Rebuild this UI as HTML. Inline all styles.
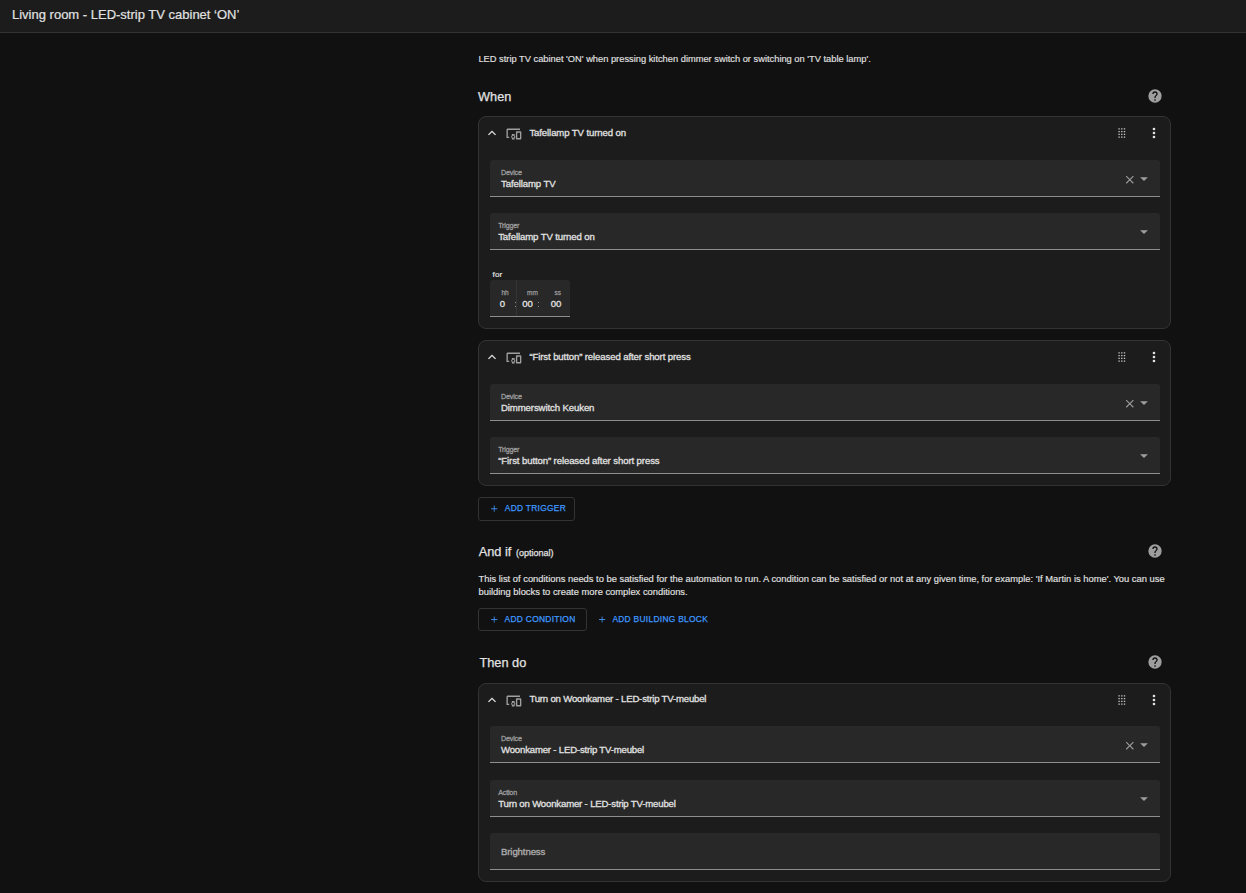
<!DOCTYPE html>
<html><head><meta charset="utf-8"><title>Automation</title>
<style>
html,body{margin:0;padding:0;width:1246px;height:893px;overflow:hidden;background:#111111;font-family:"Liberation Sans",sans-serif;}
#hdr{position:absolute;left:0;top:0;width:1246px;height:32px;background:#1c1c1c;border-bottom:1px solid #343434;}
.t{position:absolute;white-space:nowrap;line-height:1;}
.i{position:absolute;overflow:visible;}
.card{position:absolute;left:478px;box-sizing:border-box;width:693px;background:#1c1c1c;border:1px solid #333333;border-radius:8px;}
.fld{position:absolute;left:490px;width:670px;height:37px;box-sizing:border-box;background:#282828;border-bottom:1px solid #8e8e8e;border-radius:3px 3px 0 0;}
.btn{position:absolute;box-sizing:border-box;border:1px solid #333333;border-radius:3px;}
</style></head>
<body>
<div id="hdr"></div>
<div class="t" style="left:12.00px;top:8.20px;font-size:13px;color:#e1e1e1;font-weight:400;-webkit-text-stroke:0.2px currentColor;">Living room - LED-strip TV cabinet ‘ON’</div>
<div class="t" style="left:478.40px;top:54.63px;font-size:9.3px;color:#e1e1e1;font-weight:400;-webkit-text-stroke:0.15px currentColor;">LED strip TV cabinet 'ON' when pressing kitchen dimmer switch or switching on 'TV table lamp'.</div>
<div class="t" style="left:478.10px;top:90.85px;font-size:12.7px;color:#e1e1e1;font-weight:400;-webkit-text-stroke:0.25px currentColor;">When</div>
<svg class="i" style="left:1147px;top:88px;width:18px;height:18px" viewBox="0 0 27.0000 27.0000"><path transform="translate(0.0000 0.0000)" fill="#9e9e9e" d="M15.07,11.25L14.17,12.17C13.45,12.89 13,13.5 13,15H11V14.5C11,13.39 11.45,12.39 12.17,11.67L13.41,10.41C13.78,10.05 14,9.55 14,9C14,7.89 13.1,7 12,7A2,2 0 0,0 10,9H8A4,4 0 0,1 12,5A4,4 0 0,1 16,9C16,9.88 15.64,10.67 15.07,11.25M13,19H11V17H13M12,2A10,10 0 0,0 2,12A10,10 0 0,0 12,22A10,10 0 0,0 22,12C22,6.47 17.5,2 12,2Z"/></svg>
<div class="card" style="top:116px;height:213px"></div>
<svg class="i" style="left:484px;top:125px;width:18px;height:18px" viewBox="0 0 27.0000 27.0000"><path transform="translate(0.0000 0.1500)" fill="#e1e1e1" d="M7.41,15.41L12,10.83L16.59,15.41L18,14L12,8L6,14L7.41,15.41Z"/></svg>
<svg class="i" style="left:505px;top:125px;width:19px;height:19px" viewBox="0 0 28.1481 28.1481"><path transform="translate(1.1852 1.3333)" fill="#a0a0a0" d="M3 6H21V4H3C1.9 4 1 4.9 1 6V18H5V16H3V6M13 12H9V13.78C8.39 14.33 8 15.11 8 16C8 16.89 8.39 17.67 9 18.22V20H13V18.22C13.61 17.67 14 16.88 14 16S13.61 14.33 13 13.78V12M11 17.5C10.17 17.5 9.5 16.830 9.5 16S10.17 14.5 11 14.5 12.5 15.17 12.5 16 11.83 17.5 11 17.5M22 8H16C15.5 8 15 8.5 15 9V19C15 19.5 15.5 20 16 20H22C22.5 20 23 19.5 23 19V9C23 8.5 22.5 8 22 8M21 18H17V10H21V18Z"/></svg>
<div class="t" style="left:529.40px;top:127.87px;font-size:9.6px;color:#e1e1e1;font-weight:400;-webkit-text-stroke:0.3px currentColor;letter-spacing:-0.11px;">Tafellamp TV turned on</div>
<svg class="i" style="left:1113px;top:124px;width:19px;height:19px" viewBox="0 0 27.9755 27.9755"><path transform="translate(0.9571 1.2515)" fill="#c8c8c8" d="M7,19V17H9V19H7M11,19V17H13V19H11M15,19V17H17V19H15M7,15V13H9V15H7M11,15V13H13V15H11M15,15V13H17V15H15M7,11V9H9V11H7M11,11V9H13V11H11M15,11V9H17V11H15M7,7V5H9V7H7M11,7V5H13V7H11M15,7V5H17V7H15Z"/></svg>
<svg class="i" style="left:1146px;top:125px;width:18px;height:18px" viewBox="0 0 27.0000 27.0000"><path transform="translate(0.0000 0.0000)" fill="#e1e1e1" d="M12,16A2,2 0 0,1 14,18A2,2 0 0,1 12,20A2,2 0 0,1 10,18A2,2 0 0,1 12,16M12,10A2,2 0 0,1 14,12A2,2 0 0,1 12,14A2,2 0 0,1 10,12A2,2 0 0,1 12,10M12,4A2,2 0 0,1 14,6A2,2 0 0,1 12,8A2,2 0 0,1 10,6A2,2 0 0,1 12,4Z"/></svg>
<div class="fld" style="top:160px"></div>
<div class="t" style="left:501.00px;top:168.91px;font-size:7.2px;color:#9b9b9b;font-weight:400;-webkit-text-stroke:0.3px currentColor;letter-spacing:-0.2px;">Device</div>
<div class="t" style="left:501.00px;top:178.72px;font-size:9.6px;color:#e1e1e1;font-weight:400;-webkit-text-stroke:0.3px currentColor;letter-spacing:-0.11px;">Tafellamp TV</div>
<svg class="i" style="left:1123px;top:172px;width:16px;height:16px" viewBox="0 0 28.2353 28.2353"><path transform="translate(0.0000 1.5882)" fill="#9e9e9e" d="M19,6.41L17.59,5L12,10.59L6.41,5L5,6.41L10.59,12L5,17.59L6.41,19L12,13.41L17.59,19L19,17.59L13.41,12L19,6.41Z"/></svg>
<svg class="i" style="left:1134px;top:169px;width:21px;height:21px" viewBox="0 0 26.9519 26.9519"><path transform="translate(0.8342 0.4492)" fill="#9e9e9e" d="M7,10L12,15L17,10H7Z"/></svg>
<div class="fld" style="top:213px"></div>
<div class="t" style="left:498.20px;top:221.91px;font-size:7.2px;color:#9b9b9b;font-weight:400;-webkit-text-stroke:0.3px currentColor;letter-spacing:-0.2px;">Trigger</div>
<div class="t" style="left:498.20px;top:231.72px;font-size:9.6px;color:#e1e1e1;font-weight:400;-webkit-text-stroke:0.3px currentColor;letter-spacing:-0.11px;">Tafellamp TV turned on</div>
<svg class="i" style="left:1134px;top:222px;width:21px;height:21px" viewBox="0 0 26.9519 26.9519"><path transform="translate(0.8342 0.4492)" fill="#9e9e9e" d="M7,10L12,15L17,10H7Z"/></svg>
<div class="t" style="left:492.50px;top:270.53px;font-size:8.0px;color:#e1e1e1;font-weight:400;-webkit-text-stroke:0.2px currentColor;letter-spacing:0.2px;">for</div>
<div class="fld" style="top:280px;left:490px;width:80px"></div>
<div style="position:absolute;left:516px;top:280px;width:1px;height:36px;background:#343434"></div>
<div class="t" style="left:501.50px;top:289.70px;font-size:6.5px;color:#9b9b9b;font-weight:400;-webkit-text-stroke:0.25px currentColor;">hh</div>
<div class="t" style="left:499.80px;top:299.17px;font-size:9.6px;color:#e1e1e1;font-weight:400;-webkit-text-stroke:0.3px currentColor;letter-spacing:-0.11px;">0</div>
<div style="position:absolute;left:515px;top:302px;width:1px;height:1px;background:#8c8c8c"></div>
<div style="position:absolute;left:515px;top:306px;width:1px;height:1px;background:#8c8c8c"></div>
<div style="position:absolute;left:538px;top:302px;width:1px;height:1px;background:#8c8c8c"></div>
<div style="position:absolute;left:538px;top:306px;width:1px;height:1px;background:#8c8c8c"></div>
<div class="t" style="left:527.00px;top:289.70px;font-size:6.5px;color:#9b9b9b;font-weight:400;-webkit-text-stroke:0.25px currentColor;letter-spacing:0.2px;">mm</div>
<div class="t" style="left:522.20px;top:299.17px;font-size:9.6px;color:#e1e1e1;font-weight:400;-webkit-text-stroke:0.3px currentColor;letter-spacing:-0.11px;">00</div>
<div class="t" style="left:554.50px;top:289.70px;font-size:6.5px;color:#9b9b9b;font-weight:400;-webkit-text-stroke:0.25px currentColor;">ss</div>
<div class="t" style="left:550.80px;top:299.17px;font-size:9.6px;color:#e1e1e1;font-weight:400;-webkit-text-stroke:0.3px currentColor;letter-spacing:-0.11px;">00</div>
<div class="card" style="top:340px;height:146px"></div>
<svg class="i" style="left:484px;top:349px;width:18px;height:18px" viewBox="0 0 27.0000 27.0000"><path transform="translate(0.0000 0.1500)" fill="#e1e1e1" d="M7.41,15.41L12,10.83L16.59,15.41L18,14L12,8L6,14L7.41,15.41Z"/></svg>
<svg class="i" style="left:505px;top:349px;width:19px;height:19px" viewBox="0 0 28.1481 28.1481"><path transform="translate(1.1852 1.3333)" fill="#a0a0a0" d="M3 6H21V4H3C1.9 4 1 4.9 1 6V18H5V16H3V6M13 12H9V13.78C8.39 14.33 8 15.11 8 16C8 16.89 8.39 17.67 9 18.22V20H13V18.22C13.61 17.67 14 16.88 14 16S13.61 14.33 13 13.78V12M11 17.5C10.17 17.5 9.5 16.830 9.5 16S10.17 14.5 11 14.5 12.5 15.17 12.5 16 11.83 17.5 11 17.5M22 8H16C15.5 8 15 8.5 15 9V19C15 19.5 15.5 20 16 20H22C22.5 20 23 19.5 23 19V9C23 8.5 22.5 8 22 8M21 18H17V10H21V18Z"/></svg>
<div class="t" style="left:529.40px;top:351.87px;font-size:9.6px;color:#e1e1e1;font-weight:400;-webkit-text-stroke:0.3px currentColor;letter-spacing:-0.11px;">“First button” released after short press</div>
<svg class="i" style="left:1113px;top:348px;width:19px;height:19px" viewBox="0 0 27.9755 27.9755"><path transform="translate(0.9571 1.2515)" fill="#c8c8c8" d="M7,19V17H9V19H7M11,19V17H13V19H11M15,19V17H17V19H15M7,15V13H9V15H7M11,15V13H13V15H11M15,15V13H17V15H15M7,11V9H9V11H7M11,11V9H13V11H11M15,11V9H17V11H15M7,7V5H9V7H7M11,7V5H13V7H11M15,7V5H17V7H15Z"/></svg>
<svg class="i" style="left:1146px;top:349px;width:18px;height:18px" viewBox="0 0 27.0000 27.0000"><path transform="translate(0.0000 0.0000)" fill="#e1e1e1" d="M12,16A2,2 0 0,1 14,18A2,2 0 0,1 12,20A2,2 0 0,1 10,18A2,2 0 0,1 12,16M12,10A2,2 0 0,1 14,12A2,2 0 0,1 12,14A2,2 0 0,1 10,12A2,2 0 0,1 12,10M12,4A2,2 0 0,1 14,6A2,2 0 0,1 12,8A2,2 0 0,1 10,6A2,2 0 0,1 12,4Z"/></svg>
<div class="fld" style="top:384px"></div>
<div class="t" style="left:501.00px;top:392.91px;font-size:7.2px;color:#9b9b9b;font-weight:400;-webkit-text-stroke:0.3px currentColor;letter-spacing:-0.2px;">Device</div>
<div class="t" style="left:501.00px;top:402.72px;font-size:9.6px;color:#e1e1e1;font-weight:400;-webkit-text-stroke:0.3px currentColor;letter-spacing:-0.11px;">Dimmerswitch Keuken</div>
<svg class="i" style="left:1123px;top:396px;width:16px;height:16px" viewBox="0 0 28.2353 28.2353"><path transform="translate(0.0000 1.5882)" fill="#9e9e9e" d="M19,6.41L17.59,5L12,10.59L6.41,5L5,6.41L10.59,12L5,17.59L6.41,19L12,13.41L17.59,19L19,17.59L13.41,12L19,6.41Z"/></svg>
<svg class="i" style="left:1134px;top:393px;width:21px;height:21px" viewBox="0 0 26.9519 26.9519"><path transform="translate(0.8342 0.4492)" fill="#9e9e9e" d="M7,10L12,15L17,10H7Z"/></svg>
<div class="fld" style="top:437px"></div>
<div class="t" style="left:498.20px;top:445.91px;font-size:7.2px;color:#9b9b9b;font-weight:400;-webkit-text-stroke:0.3px currentColor;letter-spacing:-0.2px;">Trigger</div>
<div class="t" style="left:498.20px;top:455.72px;font-size:9.6px;color:#e1e1e1;font-weight:400;-webkit-text-stroke:0.3px currentColor;letter-spacing:-0.11px;">“First button” released after short press</div>
<svg class="i" style="left:1134px;top:446px;width:21px;height:21px" viewBox="0 0 26.9519 26.9519"><path transform="translate(0.8342 0.4492)" fill="#9e9e9e" d="M7,10L12,15L17,10H7Z"/></svg>
<div class="btn" style="left:478px;top:497px;width:97px;height:24px"></div>
<svg class="i" style="left:488px;top:503px;width:13px;height:13px" viewBox="0 0 29.4340 29.4340"><path transform="translate(2.0377 0.9057)" fill="#3a8ae6" d="M19,13H13V19H11V13H5V11H11V5H13V11H19V13Z"/></svg>
<div class="t" style="left:504.80px;top:504.49px;font-size:8.4px;color:#3e98ff;font-weight:400;letter-spacing:0.3px;-webkit-text-stroke:0.25px currentColor;">ADD TRIGGER</div>
<div class="t" style="left:478.70px;top:545.96px;font-size:12.8px;color:#e1e1e1;font-weight:400;-webkit-text-stroke:0.25px currentColor;">And if <span style="font-size:9px;margin-left:1px">(optional)</span></div>
<svg class="i" style="left:1147px;top:543px;width:18px;height:18px" viewBox="0 0 27.0000 27.0000"><path transform="translate(0.0000 0.0000)" fill="#9e9e9e" d="M15.07,11.25L14.17,12.17C13.45,12.89 13,13.5 13,15H11V14.5C11,13.39 11.45,12.39 12.17,11.67L13.41,10.41C13.78,10.05 14,9.55 14,9C14,7.89 13.1,7 12,7A2,2 0 0,0 10,9H8A4,4 0 0,1 12,5A4,4 0 0,1 16,9C16,9.88 15.64,10.67 15.07,11.25M13,19H11V17H13M12,2A10,10 0 0,0 2,12A10,10 0 0,0 12,22A10,10 0 0,0 22,12C22,6.47 17.5,2 12,2Z"/></svg>
<div class="t" style="left:478.5px;top:573px;font-size:9.37px;line-height:12.6px;width:720px;white-space:normal;color:#e1e1e1;-webkit-text-stroke:0.15px currentColor">This list of conditions needs to be satisfied for the automation to run. A condition can be satisfied or not at any given time, for example: 'If Martin is home'. You can use<br>building blocks to create more complex conditions.</div>
<div class="btn" style="left:478px;top:608px;width:109px;height:23px"></div>
<svg class="i" style="left:488px;top:614px;width:13px;height:13px" viewBox="0 0 29.4340 29.4340"><path transform="translate(2.0377 0.4528)" fill="#3a8ae6" d="M19,13H13V19H11V13H5V11H11V5H13V11H19V13Z"/></svg>
<div class="t" style="left:504.60px;top:615.49px;font-size:8.4px;color:#3e98ff;font-weight:400;letter-spacing:0.3px;-webkit-text-stroke:0.25px currentColor;">ADD CONDITION</div>
<svg class="i" style="left:596px;top:614px;width:13px;height:13px" viewBox="0 0 29.4340 29.4340"><path transform="translate(1.8113 0.4528)" fill="#3a8ae6" d="M19,13H13V19H11V13H5V11H11V5H13V11H19V13Z"/></svg>
<div class="t" style="left:612.40px;top:615.49px;font-size:8.4px;color:#3e98ff;font-weight:400;letter-spacing:0.3px;-webkit-text-stroke:0.25px currentColor;">ADD BUILDING BLOCK</div>
<div class="t" style="left:479.40px;top:656.96px;font-size:12.8px;color:#e1e1e1;font-weight:400;-webkit-text-stroke:0.25px currentColor;">Then do</div>
<svg class="i" style="left:1147px;top:654px;width:18px;height:18px" viewBox="0 0 27.0000 27.0000"><path transform="translate(0.0000 0.0000)" fill="#9e9e9e" d="M15.07,11.25L14.17,12.17C13.45,12.89 13,13.5 13,15H11V14.5C11,13.39 11.45,12.39 12.17,11.67L13.41,10.41C13.78,10.05 14,9.55 14,9C14,7.89 13.1,7 12,7A2,2 0 0,0 10,9H8A4,4 0 0,1 12,5A4,4 0 0,1 16,9C16,9.88 15.64,10.67 15.07,11.25M13,19H11V17H13M12,2A10,10 0 0,0 2,12A10,10 0 0,0 12,22A10,10 0 0,0 22,12C22,6.47 17.5,2 12,2Z"/></svg>
<div class="card" style="top:683px;height:199px"></div>
<svg class="i" style="left:484px;top:692px;width:18px;height:18px" viewBox="0 0 27.0000 27.0000"><path transform="translate(0.0000 0.1500)" fill="#e1e1e1" d="M7.41,15.41L12,10.83L16.59,15.41L18,14L12,8L6,14L7.41,15.41Z"/></svg>
<svg class="i" style="left:505px;top:692px;width:19px;height:19px" viewBox="0 0 28.1481 28.1481"><path transform="translate(1.1852 1.3333)" fill="#a0a0a0" d="M3 6H21V4H3C1.9 4 1 4.9 1 6V18H5V16H3V6M13 12H9V13.78C8.39 14.33 8 15.11 8 16C8 16.89 8.39 17.67 9 18.22V20H13V18.22C13.61 17.67 14 16.88 14 16S13.61 14.33 13 13.78V12M11 17.5C10.17 17.5 9.5 16.830 9.5 16S10.17 14.5 11 14.5 12.5 15.17 12.5 16 11.83 17.5 11 17.5M22 8H16C15.5 8 15 8.5 15 9V19C15 19.5 15.5 20 16 20H22C22.5 20 23 19.5 23 19V9C23 8.5 22.5 8 22 8M21 18H17V10H21V18Z"/></svg>
<div class="t" style="left:529.40px;top:693.87px;font-size:9.6px;color:#e1e1e1;font-weight:400;-webkit-text-stroke:0.3px currentColor;letter-spacing:-0.11px;letter-spacing:-0.19px;">Turn on Woonkamer - LED-strip TV-meubel</div>
<svg class="i" style="left:1113px;top:691px;width:19px;height:19px" viewBox="0 0 27.9755 27.9755"><path transform="translate(0.9571 1.2515)" fill="#c8c8c8" d="M7,19V17H9V19H7M11,19V17H13V19H11M15,19V17H17V19H15M7,15V13H9V15H7M11,15V13H13V15H11M15,15V13H17V15H15M7,11V9H9V11H7M11,11V9H13V11H11M15,11V9H17V11H15M7,7V5H9V7H7M11,7V5H13V7H11M15,7V5H17V7H15Z"/></svg>
<svg class="i" style="left:1146px;top:692px;width:18px;height:18px" viewBox="0 0 27.0000 27.0000"><path transform="translate(0.0000 0.0000)" fill="#e1e1e1" d="M12,16A2,2 0 0,1 14,18A2,2 0 0,1 12,20A2,2 0 0,1 10,18A2,2 0 0,1 12,16M12,10A2,2 0 0,1 14,12A2,2 0 0,1 12,14A2,2 0 0,1 10,12A2,2 0 0,1 12,10M12,4A2,2 0 0,1 14,6A2,2 0 0,1 12,8A2,2 0 0,1 10,6A2,2 0 0,1 12,4Z"/></svg>
<div class="fld" style="top:726px"></div>
<div class="t" style="left:501.00px;top:734.91px;font-size:7.2px;color:#9b9b9b;font-weight:400;-webkit-text-stroke:0.3px currentColor;letter-spacing:-0.2px;">Device</div>
<div class="t" style="left:501.00px;top:744.72px;font-size:9.6px;color:#e1e1e1;font-weight:400;-webkit-text-stroke:0.3px currentColor;letter-spacing:-0.11px;letter-spacing:-0.19px;">Woonkamer - LED-strip TV-meubel</div>
<svg class="i" style="left:1123px;top:738px;width:16px;height:16px" viewBox="0 0 28.2353 28.2353"><path transform="translate(0.0000 1.5882)" fill="#9e9e9e" d="M19,6.41L17.59,5L12,10.59L6.41,5L5,6.41L10.59,12L5,17.59L6.41,19L12,13.41L17.59,19L19,17.59L13.41,12L19,6.41Z"/></svg>
<svg class="i" style="left:1134px;top:735px;width:21px;height:21px" viewBox="0 0 26.9519 26.9519"><path transform="translate(0.8342 0.4492)" fill="#9e9e9e" d="M7,10L12,15L17,10H7Z"/></svg>
<div class="fld" style="top:780px"></div>
<div class="t" style="left:498.20px;top:788.91px;font-size:7.2px;color:#9b9b9b;font-weight:400;-webkit-text-stroke:0.3px currentColor;letter-spacing:-0.2px;">Action</div>
<div class="t" style="left:498.20px;top:798.72px;font-size:9.6px;color:#e1e1e1;font-weight:400;-webkit-text-stroke:0.3px currentColor;letter-spacing:-0.11px;letter-spacing:-0.175px;">Turn on Woonkamer - LED-strip TV-meubel</div>
<svg class="i" style="left:1134px;top:789px;width:21px;height:21px" viewBox="0 0 26.9519 26.9519"><path transform="translate(0.8342 0.4492)" fill="#9e9e9e" d="M7,10L12,15L17,10H7Z"/></svg>
<div class="fld" style="top:833px"></div>
<div class="t" style="left:501.00px;top:846.87px;font-size:9.6px;color:#ababab;font-weight:400;-webkit-text-stroke:0.3px currentColor;letter-spacing:-0.11px;-webkit-text-stroke:0.35px currentColor;">Brightness</div>
</body></html>
